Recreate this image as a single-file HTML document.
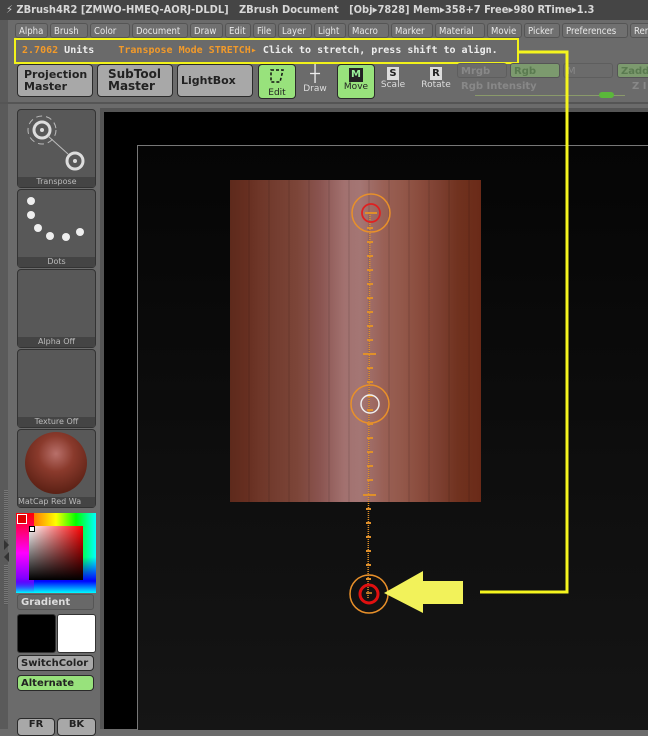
<!DOCTYPE html>
<html><head><style>
body{margin:0;width:648px;height:729px;background:#6b6b6b;position:relative;overflow:hidden;font-family:"DejaVu Sans","Liberation Sans",sans-serif;}
.a{position:absolute;}
.title{left:0;top:0;width:648px;height:20px;background:#454545;color:#d8d8d8;font-size:11px;line-height:20px;font-weight:bold;white-space:nowrap;font-family:"DejaVu Sans Condensed","DejaVu Sans",sans-serif;}
.m{position:absolute;top:23px;height:15px;border:1px solid #555;border-radius:3px;background:#707070;color:#e8e8e8;font-size:9.5px;line-height:15px;padding-left:3px;box-sizing:border-box;white-space:nowrap;overflow:hidden;font-family:"DejaVu Sans Condensed","DejaVu Sans",sans-serif;}
.btn{border:1px solid #2a2a2a;border-radius:4px;background:#a8a8a8;color:#222;font-size:11px;font-weight:bold;}
.lbtn{background:#585858;border:1px solid #333;border-radius:4px;}
.lab{position:absolute;bottom:0;left:0;right:0;height:10px;background:#444;color:#bbb;font-size:8px;text-align:center;line-height:10px;}
</style></head><body>
<div class="a title"><span style="padding-left:6px;color:#ccc">⚡</span> ZBrush4R2 [ZMWO-HMEQ-AORJ-DLDL] &nbsp; ZBrush Document &nbsp; [Obj▸7828] Mem▸358+7 Free▸980 RTime▸1.3</div>
<div class="a" style="left:0;top:20px;width:8px;height:709px;background:#5a5a5a"></div>
<div class="m" style="left:15px;width:33px">Alpha</div>
<div class="m" style="left:50px;width:38px">Brush</div>
<div class="m" style="left:90px;width:40px">Color</div>
<div class="m" style="left:132px;width:56px">Document</div>
<div class="m" style="left:190px;width:33px">Draw</div>
<div class="m" style="left:225px;width:26px">Edit</div>
<div class="m" style="left:253px;width:23px">File</div>
<div class="m" style="left:278px;width:34px">Layer</div>
<div class="m" style="left:314px;width:32px">Light</div>
<div class="m" style="left:348px;width:41px">Macro</div>
<div class="m" style="left:391px;width:42px">Marker</div>
<div class="m" style="left:435px;width:50px">Material</div>
<div class="m" style="left:487px;width:35px">Movie</div>
<div class="m" style="left:524px;width:36px">Picker</div>
<div class="m" style="left:562px;width:66px">Preferences</div>
<div class="m" style="left:630px;width:30px">Ren</div>
<div class="a" style="left:14px;top:38px;width:501px;height:22px;border:2px solid #f2f21a;background:#6a6a6a;font-size:10px;font-weight:bold;line-height:22px;color:#eee;white-space:pre;font-family:'DejaVu Sans Mono','Liberation Mono',monospace"><span style="color:#f29a2a"> 2.7062</span> Units    <span style="color:#f29a2a">Transpose Mode STRETCH▸</span> Click to stretch, press shift to align.</div>
<div class="a btn" style="left:17px;top:64px;width:76px;height:33px;line-height:12px;padding:4px 0 0 6px;box-sizing:border-box">Projection<br>Master</div>
<div class="a btn" style="left:97px;top:64px;width:76px;height:33px;line-height:12px;padding:3px 0 0 10px;box-sizing:border-box;font-size:12px">SubTool<br>Master</div>
<div class="a btn" style="left:177px;top:64px;width:76px;height:33px;line-height:31px;padding-left:3px;box-sizing:border-box">LightBox</div>
<div class="a" style="left:258px;top:64px;width:36px;height:33px;background:#98e27c;border:1px solid #2a2a2a;border-radius:4px;font-size:9px;text-align:center;color:#222"><svg width="20" height="18" style="margin-top:2px"><path d="M4 3h12l-3 12H4z" fill="none" stroke="#111" stroke-width="1.5" stroke-dasharray="3,2"/></svg><br>Edit</div>
<div class="a" style="left:300px;top:64px;width:30px;height:33px;font-size:9px;text-align:center;color:#ddd"><div style="font-size:16px;line-height:20px;color:#eee">┼</div>Draw</div>
<div class="a" style="left:337px;top:64px;width:36px;height:33px;background:#98e27c;border:1px solid #2a2a2a;border-radius:4px;font-size:9px;text-align:center;color:#222"><div style="margin:3px auto 0;width:14px;height:14px;background:#222;color:#9e9;font-size:10px;font-weight:bold;line-height:14px">M</div>Move</div>
<div class="a" style="left:378px;top:64px;width:30px;height:33px;font-size:9px;text-align:center;color:#ddd"><div style="margin:3px auto 0;width:12px;height:13px;background:#ddd;color:#222;font-size:10px;font-weight:bold;line-height:13px">S</div>Scale</div>
<div class="a" style="left:420px;top:64px;width:32px;height:33px;font-size:9px;text-align:center;color:#ddd"><div style="margin:3px auto 0;width:12px;height:13px;background:#ddd;color:#222;font-size:10px;font-weight:bold;line-height:13px">R</div>Rotate</div>
<div class="a" style="left:457px;top:63px;width:50px;height:15px;border:1px solid #5e5e5e;border-radius:3px;color:#888;font-size:10px;font-weight:bold;line-height:15px;padding-left:3px;box-sizing:border-box">Mrgb</div>
<div class="a" style="left:510px;top:63px;width:50px;height:15px;border:1px solid #555;border-radius:3px;background:#7c9a6e;color:#5a7a50;font-size:10px;font-weight:bold;line-height:15px;padding-left:3px;box-sizing:border-box">Rgb</div>
<div class="a" style="left:563px;top:63px;width:50px;height:15px;border:1px solid #5e5e5e;border-radius:3px;color:#888;font-size:10px;line-height:15px;padding-left:3px;box-sizing:border-box">M</div>
<div class="a" style="left:617px;top:63px;width:40px;height:15px;border:1px solid #555;border-radius:3px;background:#7c9a6e;color:#5a7a50;font-size:10px;font-weight:bold;line-height:15px;padding-left:3px;box-sizing:border-box">Zadd</div>
<div class="a" style="left:461px;top:81px;color:#888;font-size:10px;font-weight:bold">Rgb Intensity</div>
<div class="a" style="left:632px;top:81px;color:#888;font-size:10px;font-weight:bold">Z I</div>
<div class="a" style="left:475px;top:95px;width:150px;height:1px;background:#8a9a6a"></div>
<div class="a" style="left:599px;top:92px;width:15px;height:6px;background:#5ab83a;border-radius:3px"></div>
<div class="a" style="left:0;top:102px;width:648px;height:2px;background:#555"></div>
<div class="a" style="left:100px;top:108px;width:548px;height:621px;background:#555"></div>
<div class="a" style="left:104px;top:112px;width:544px;height:617px;background:#000"></div>
<div class="a" style="left:137px;top:145px;width:511px;height:584px;border-left:1px solid #777;border-top:1px solid #777;background:linear-gradient(#050505,#151515)"></div>
<div class="a" style="left:230px;top:180px;width:251px;height:322px;background:linear-gradient(90deg,#5e2a1c 0,#662e20 16px,#6e3628 29px,#743d30 46px,#7c4538 67px,#8a5450 90px,#a2716f 114px,#a47674 130px,#996055 154px,#93584a 172px,#8a4c3d 190px,#7c3f30 210px,#70321f 228px,#6a2a18 251px)"></div>
<div class="a" style="left:230px;top:180px;width:251px;height:322px;background:repeating-linear-gradient(90deg,transparent 0,transparent 18px,rgba(0,0,0,.08) 18px,rgba(0,0,0,.08) 20px)"></div>
<svg class="a" style="left:0;top:0" width="648" height="729">
<line x1="370" y1="213" x2="368" y2="598" stroke="#e0902a" stroke-width="1.5" stroke-dasharray="1,1"/>
<g stroke="#e0902a" stroke-width="2">
<path d="M367 228h6M367 242h6M367 256h6M367 270h6M367 284h6M367 298h6M367 312h6M367 326h6M367 340h6M363 354h13M367 368h6M367 382h6M367 396h6M367 410h6M367 424h6M367 438h6M367 452h6M367 466h6M367 480h6M363 495h13M366 509h5M366 523h5M366 537h5M366 551h5M366 565h5M366 579h5M365 213h12"/>
</g>
<circle cx="371" cy="213" r="19" fill="none" stroke="#e8902a" stroke-width="1.5"/>
<circle cx="371" cy="213" r="9" fill="none" stroke="#e02020" stroke-width="1.8"/>
<circle cx="370" cy="404" r="19" fill="none" stroke="#e8902a" stroke-width="1.5"/>
<circle cx="370" cy="404" r="9" fill="none" stroke="#eee" stroke-width="1.5"/>
<circle cx="369" cy="594" r="19" fill="none" stroke="#e8902a" stroke-width="1.5"/>
<circle cx="369" cy="594" r="9" fill="none" stroke="#e01010" stroke-width="3"/>
<path d="M366 593h6" stroke="#e0902a" stroke-width="1.5"/>
<polyline points="518,52 567,52 567,592 480,592" fill="none" stroke="#f5f51e" stroke-width="3"/>
<polygon points="384,593 423,571 423,581 463,581 463,604 423,604 423,613" fill="#f2f25a"/>
</svg>
<div class="a lbtn" style="left:17px;top:109px;width:77px;height:77px"><svg width="77" height="66"><circle cx="24" cy="20" r="14" fill="none" stroke="#bbb" stroke-width="1" stroke-dasharray="6,4"/><circle cx="24" cy="20" r="8" fill="none" stroke="#ddd" stroke-width="3"/><circle cx="24" cy="20" r="2" fill="#ddd"/><line x1="30" y1="26" x2="50" y2="44" stroke="#bbb"/><circle cx="57" cy="51" r="8" fill="none" stroke="#ddd" stroke-width="3"/><circle cx="57" cy="51" r="2" fill="#ddd"/></svg><div class="lab">Transpose</div></div>
<div class="a lbtn" style="left:17px;top:189px;width:77px;height:77px"><svg width="77" height="66"><g fill="#eee"><circle cx="13" cy="11" r="4"/><circle cx="13" cy="25" r="4"/><circle cx="20" cy="38" r="4"/><circle cx="32" cy="46" r="4"/><circle cx="48" cy="47" r="4"/><circle cx="62" cy="42" r="4"/></g></svg><div class="lab">Dots</div></div>
<div class="a lbtn" style="left:17px;top:269px;width:77px;height:77px"><div class="lab">Alpha Off</div></div>
<div class="a lbtn" style="left:17px;top:349px;width:77px;height:77px"><div class="lab">Texture Off</div></div>
<div class="a lbtn" style="left:17px;top:429px;width:77px;height:77px"><div style="position:absolute;left:7px;top:2px;width:62px;height:62px;border-radius:50%;background:radial-gradient(circle at 50% 35%,#b8706a 0,#8a3a2c 35%,#5a2014 80%,#3a140c 100%)"></div><div class="lab" style="text-align:left">MatCap Red Wa</div></div>
<div class="a" style="left:16px;top:513px;width:80px;height:80px;background:linear-gradient(90deg,#f00,#f80,#ff0,#0f0,#0ff)"></div>
<div class="a" style="left:16px;top:513px;width:80px;height:80px;background:linear-gradient(transparent 55%,#00f 85%,#0ff)"></div>
<div class="a" style="left:16px;top:513px;width:18px;height:80px;background:linear-gradient(#f00,#f0f 50%,#80f 80%,transparent)"></div>
<div class="a" style="left:29px;top:526px;width:54px;height:54px;background:linear-gradient(transparent,#000),linear-gradient(90deg,#fff,#f00)"></div>
<div class="a" style="left:17px;top:514px;width:8px;height:8px;background:#d00;border:1px solid #fff"></div>
<div class="a" style="left:29px;top:526px;width:4px;height:4px;background:#fff;border:1px solid #000"></div>
<div class="a" style="left:17px;top:594px;width:77px;height:16px;background:#686868;border:1px solid #555;border-radius:3px;color:#ddd;font-size:10px;font-weight:bold;line-height:16px;padding-left:3px;box-sizing:border-box">Gradient</div>
<div class="a" style="left:17px;top:614px;width:37px;height:37px;background:#000;border:1px solid #333;border-radius:3px"></div>
<div class="a" style="left:57px;top:614px;width:37px;height:37px;background:#fff;border:1px solid #333;border-radius:3px"></div>
<div class="a btn" style="left:17px;top:655px;width:77px;height:16px;font-size:10px;line-height:15px;padding-left:3px;box-sizing:border-box">SwitchColor</div>
<div class="a btn" style="left:17px;top:675px;width:77px;height:16px;font-size:10px;line-height:15px;padding-left:3px;box-sizing:border-box;background:#98e27c">Alternate</div>
<div class="a btn" style="left:17px;top:718px;width:36px;height:16px;font-size:10px;text-align:center">FR</div>
<div class="a btn" style="left:57px;top:718px;width:37px;height:16px;font-size:10px;text-align:center">BK</div>
<div class="a" style="left:4px;top:490px;width:4px;height:50px;background:repeating-linear-gradient(#777 0,#777 1px,#555 1px,#555 2px)"></div>
<div class="a" style="left:4px;top:565px;width:4px;height:40px;background:repeating-linear-gradient(#777 0,#777 1px,#555 1px,#555 2px)"></div>
<div class="a" style="left:4px;top:540px;width:0;height:0;border-left:5px solid #333;border-top:5px solid transparent;border-bottom:5px solid transparent"></div>
<div class="a" style="left:4px;top:552px;width:0;height:0;border-right:5px solid #333;border-top:5px solid transparent;border-bottom:5px solid transparent"></div>
</body></html>
